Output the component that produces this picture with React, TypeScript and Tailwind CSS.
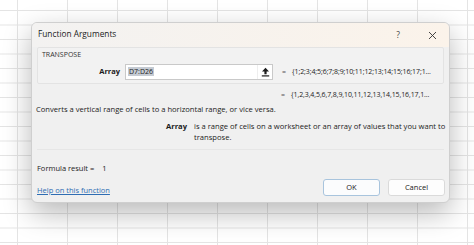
import React from 'react';

const font = "font-['Segoe_UI','Open_Sans','Noto_Sans',sans-serif]";

const CollapseIcon: React.FC = () => (
  <svg width="9" height="10" viewBox="0 0 9 10" fill="none">
    <path d="M4.5 0.8 L8 4.6 L5.6 4.6 L5.6 7.2 L3.4 7.2 L3.4 4.6 L1 4.6 Z" fill="#1c1c1c" />
    <rect x="0.8" y="8.3" width="7.4" height="1.2" fill="#1c1c1c" />
  </svg>
);

const App: React.FC = () => {
  return (
    <div
      className={`w-[474px] h-[245px] overflow-hidden bg-white pt-[22px] pl-[31px] ${font} text-[#1b1b1b] [background-image:linear-gradient(to_right,#e4e4e4_1px,transparent_1px),linear-gradient(to_bottom,#e4e4e4_1px,transparent_1px)] [background-size:50px_14.5px] [background-position:17px_10px]`}
    >
      <div className="w-[419px] h-[181px] rounded-[6px] border border-[#cfcfcf] bg-[#f0f0f0] shadow-[0_10px_28px_rgba(0,0,0,0.28)] overflow-hidden flex flex-col">
        {/* title bar */}
        <div className="h-[24px] shrink-0 flex items-center pl-[6px] bg-[linear-gradient(to_right,#f3f2f1,#fbf3ea)] text-[8.3px]">
          <span className="flex-1 pb-[1px]">Function Arguments</span>
          <span className="w-[34px] text-center text-[8.5px] text-[#444]">?</span>
          <span className="w-[34px] flex justify-center">
            <svg width="9" height="9" viewBox="0 0 9 9" stroke="#333" strokeWidth="0.9">
              <path d="M1 1 L8 8 M8 1 L1 8" />
            </svg>
          </span>
        </div>

        {/* group box */}
        <div className="mx-[5px] h-[37px] shrink-0 border border-[#e3e3e3] rounded-[2px] bg-[#f2f2f2] flex flex-col">
          <div className="h-[15px] flex items-center pl-[4px] text-[7px] text-[#333]">TRANSPOSE</div>
          <div className="h-[18px] flex items-center">
            <span className="w-[82px] text-right font-bold text-[7.5px]">Array</span>
            <div className="ml-[5px] w-[148px] h-[16px] bg-white border border-[#c9c9c9] flex items-center">
              <span className="ml-[2px] flex-1 text-[7px]">
                <span className="bg-[#c5cbd3] px-[1px]">D7:D26</span>
              </span>
              <span className="w-[15px] h-full flex items-center justify-center border-l border-[#eeeeee]">
                <CollapseIcon />
              </span>
            </div>
            <span className="ml-[9px] w-[10px] text-[7px] text-[#555]">=</span>
            <span className="text-[7px] tracking-[-0.1px]">{'{1;2;3;4;5;6;7;8;9;10;11;12;13;14;15;16;17;1...'}</span>
          </div>
        </div>

        {/* result row */}
        <div className="h-[17px] shrink-0 flex items-center pl-[249px] pt-[5px]">
          <span className="w-[10px] text-[7px] text-[#555]">=</span>
          <span className="text-[7px] tracking-[-0.1px]">{'{1,2,3,4,5,6,7,8,9,10,11,12,13,14,15,16,17,1...'}</span>
        </div>

        <div className="mt-[2px] h-[13px] shrink-0 flex items-center pl-[4px] text-[7.6px]">
          Converts a vertical range of cells to a horizontal range, or vice versa.
        </div>

        <div className="mt-[5px] h-[28px] shrink-0 flex text-[7.6px] leading-[11px]">
          <span className="w-[155px] text-right font-bold">Array</span>
          <span className="ml-[7px] w-[254px]">
            is a range of cells on a worksheet or an array of values that you want to transpose.
          </span>
        </div>

        <div className="mx-[5px] h-px shrink-0 bg-[#e6e6e6]" />

        <div className="h-[14px] mt-[12px] shrink-0 flex items-center pl-[5px] text-[7.5px]">
          <span>Formula result =</span>
          <span className="ml-[8px]">1</span>
        </div>

        <div className="mt-[3px] shrink-0 flex items-center pl-[5px] pr-[4px]">
          <span className="flex-1 text-[7.5px] text-[#2f6db3] underline underline-offset-[1px] mt-[6px]">
            Help on this function
          </span>
          <button className="w-[57px] h-[17px] rounded-[3px] border border-[#a8c4dd] bg-[#fbfcfd] text-[7.5px]">
            OK
          </button>
          <button className="ml-[8px] w-[57px] h-[17px] rounded-[3px] border border-[#dadada] bg-[#fdfdfd] text-[7.5px]">
            Cancel
          </button>
        </div>
      </div>
    </div>
  );
};

export default App;
